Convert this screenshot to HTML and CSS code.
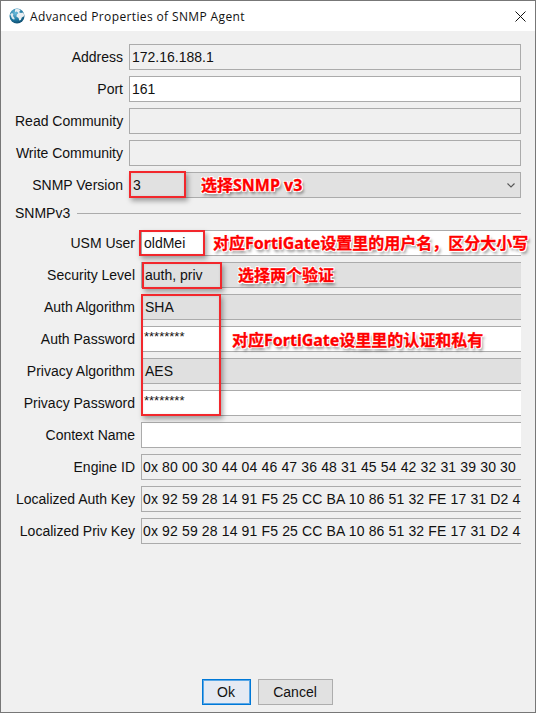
FILE: index.html
```html
<!DOCTYPE html>
<html lang="zh">
<head>
<meta charset="utf-8">
<title>Advanced Properties of SNMP Agent</title>
<link rel="stylesheet" href="styles.css">
</head>
<body>
<div class="window">
  <header class="titlebar">
    <svg class="globe" viewBox="0 0 16 16" width="16" height="16" aria-hidden="true">
      <defs>
        <radialGradient id="g" cx="0.4" cy="0.3" r="0.8">
          <stop offset="0" stop-color="#6fbcdc"/>
          <stop offset="0.55" stop-color="#1f7aa3"/>
          <stop offset="1" stop-color="#0b4060"/>
        </radialGradient>
      </defs>
      <circle cx="8" cy="8" r="7.5" fill="url(#g)"/>
      <path d="M6 1.5c2-.8 4-.5 5.5.5L10 4.2 11.8 5l2.4-.6c.8 1.4 1 2.6.8 3.8l-2.2 1.2-1 2.6-1.6.6-.6-2.6-2.2-1.4.4-2.2L9.4 5 7.6 3.6 6 4z" fill="#e8eef2"/>
      <path d="M1.2 6.2 3 5l1.4 1-.4 2 1.6 2.2-.4 1.6L3 10.6z" fill="#dfe8ee"/>
    </svg>
    <span class="title">Advanced Properties of SNMP Agent</span>
    <svg class="close" viewBox="0 0 11 11" width="11" height="11" aria-hidden="true">
      <path d="M.5.5l10 10M10.5.5l-10 10" stroke="#111" stroke-width="1" fill="none"/>
    </svg>
  </header>

  <main class="content">
    <section class="form form-top">
      <label>Address</label><div class="field ro">172.16.188.1</div>
      <label>Port</label><div class="field">161</div>
      <label>Read Community</label><div class="field ro"></div>
      <label>Write Community</label><div class="field ro"></div>
      <label>SNMP Version</label>
      <div class="field combo"><span>3</span>
        <svg class="chev" viewBox="0 0 8 5" width="8" height="5" aria-hidden="true"><path d="M.5.5 4 4 7.5.5" stroke="#555" stroke-width="1.1" fill="none"/></svg>
      </div>
    </section>

    <div class="group"><span>SNMPv3</span><i></i></div>

    <section class="form form-v3">
      <label>USM User</label><div class="field open">oldMei</div>
      <label>Security Level</label><div class="field open grey">auth, priv</div>
      <label>Auth Algorithm</label><div class="field open grey">SHA</div>
      <label>Auth Password</label><div class="field open pw">********</div>
      <label>Privacy Algorithm</label><div class="field open grey">AES</div>
      <label>Privacy Password</label><div class="field open pw">********</div>
      <label>Context Name</label><div class="field open"></div>
      <label>Engine ID</label><div class="field open ro hex">0x 80 00 30 44 04 46 47 36 48 31 45 54 42 32 31 39 30 30</div>
      <label>Localized Auth Key</label><div class="field open ro hex">0x 92 59 28 14 91 F5 25 CC BA 10 86 51 32 FE 17 31 D2 4</div>
      <label>Localized Priv Key</label><div class="field open ro hex">0x 92 59 28 14 91 F5 25 CC BA 10 86 51 32 FE 17 31 D2 4</div>
    </section>

    <footer class="buttons">
      <button class="btn primary">Ok</button>
      <button class="btn cancel">Cancel</button>
    </footer>
  </main>

  <div class="mark m1"></div>
  <div class="mark m2"></div>
  <div class="mark m3"></div>
  <div class="mark m4"></div>
  <div class="note n1">选择SNMP v3</div>
  <div class="note n2">对应FortiGate设置里的用户名，区分大小写</div>
  <div class="note n3">选择两个验证</div>
  <div class="note n4">对应FortiGate设里里的认证和私有</div>
</div>
</body>
</html>
```
FILE: styles.css
```css
* { box-sizing: border-box; }
html, body { margin: 0; padding: 0; }
body { width: 536px; height: 713px; overflow: hidden; background: #f0f0f0; }

.window {
  position: relative;
  width: 536px;
  height: 713px;
  border: 1px solid #777;
  display: flex;
  flex-direction: column;
  font-family: "Liberation Sans", Arial, sans-serif;
  font-size: 14px;
  color: #111;
}

.titlebar {
  height: 30px;
  flex: none;
  background: #fff;
  display: flex;
  align-items: center;
  padding: 0 9px 0 8px;
}
.globe { flex: none; margin-right: 5px; }
.title { font-family: "Open Sans", "Noto Sans", sans-serif; font-size: 12px; letter-spacing: .37px; color: #111; flex: 1; }
.close { flex: none; }

.content {
  flex: 1;
  display: flex;
  flex-direction: column;
  padding: 13px 14px 7px 14px;
  background: #f0f0f0;
}

.form { display: grid; row-gap: 6px; column-gap: 6px; grid-auto-rows: 26px; align-items: center; }
.form-top { grid-template-columns: 108px 392px; }
.form-v3 { grid-template-columns: 120px 380px; }
.form label { text-align: right; white-space: nowrap; line-height: 26px; margin-top: -1px; }

.field {
  height: 26px;
  border: 1px solid #ababab;
  background: #fff;
  padding: 0 0 0 2px;
  line-height: 24px;
  white-space: nowrap;
  overflow: hidden;
}
.field.ro { background: #f0f0f0; }
.field.grey { background: #e0e0e0; padding-left: 3px; }
.field.open { border-right: 0; }
.field.pw { line-height: 20px; font-size: 13px; }
.field.hex { letter-spacing: .14px; padding-left: 1px; }
.combo {
  background: #e1e1e1;
  display: flex;
  align-items: center;
  justify-content: space-between;
  padding: 0 5px 0 3px;
}
.chev { flex: none; }

.group { display: flex; align-items: center; height: 16px; margin: 7px 0 9px 0; }
.group span { line-height: 16px; }
.group i { height: 1px; width: 447px; background: #ababab; margin-left: 7px; display: block; }

.buttons { margin-top: auto; display: flex; justify-content: center; gap: 7px; padding-right: 2px; }
.btn {
  height: 26px;
  font: 14px "Liberation Sans", Arial, sans-serif;
  color: #111;
  padding: 0;
  border: 1px solid #adadad;
  background: #e1e1e1;
}
.btn.primary { width: 49px; border-color: #0078d7; box-shadow: inset 0 0 0 1px #5aa7e6; background: #e5eaf3; }
.btn.cancel { width: 75px; }

.mark {
  position: absolute;
  border: 2px solid #f2272c;
  box-shadow: 2px 3px 5px rgba(0,0,0,.35), inset 0 0 3px rgba(0,0,0,.08);
  pointer-events: none;
}
.m1 { left: 128px; top: 170px; width: 57px; height: 27px; }
.m2 { left: 138px; top: 229px; width: 66px; height: 26px; }
.m3 { left: 141px; top: 261px; width: 80px; height: 27px; }
.m4 { left: 140px; top: 293px; width: 80px; height: 122px; }

.note {
  position: absolute;
  font-family: "Noto Sans", "Noto Sans CJK SC", sans-serif;
  font-weight: 700;
  font-size: 16px;
  line-height: 20px;
  color: #f00;
  -webkit-text-stroke: .3px #f00;
  white-space: nowrap;
  text-shadow: 1px 0 0 #fff, -1px 0 0 #fff, 0 1px 0 #fff, 0 -1px 0 #fff,
               1px 1px 0 #fff, -1px 1px 0 #fff, 1px -1px 0 #fff, -1px -1px 0 #fff,
               2px 3px 3px rgba(0,0,0,.45);
}
.n1 { left: 200px; top: 174px; }
.n2 { left: 212px; top: 232px; }
.n3 { left: 237px; top: 264px; }
.n4 { left: 231px; top: 329px; }
```
